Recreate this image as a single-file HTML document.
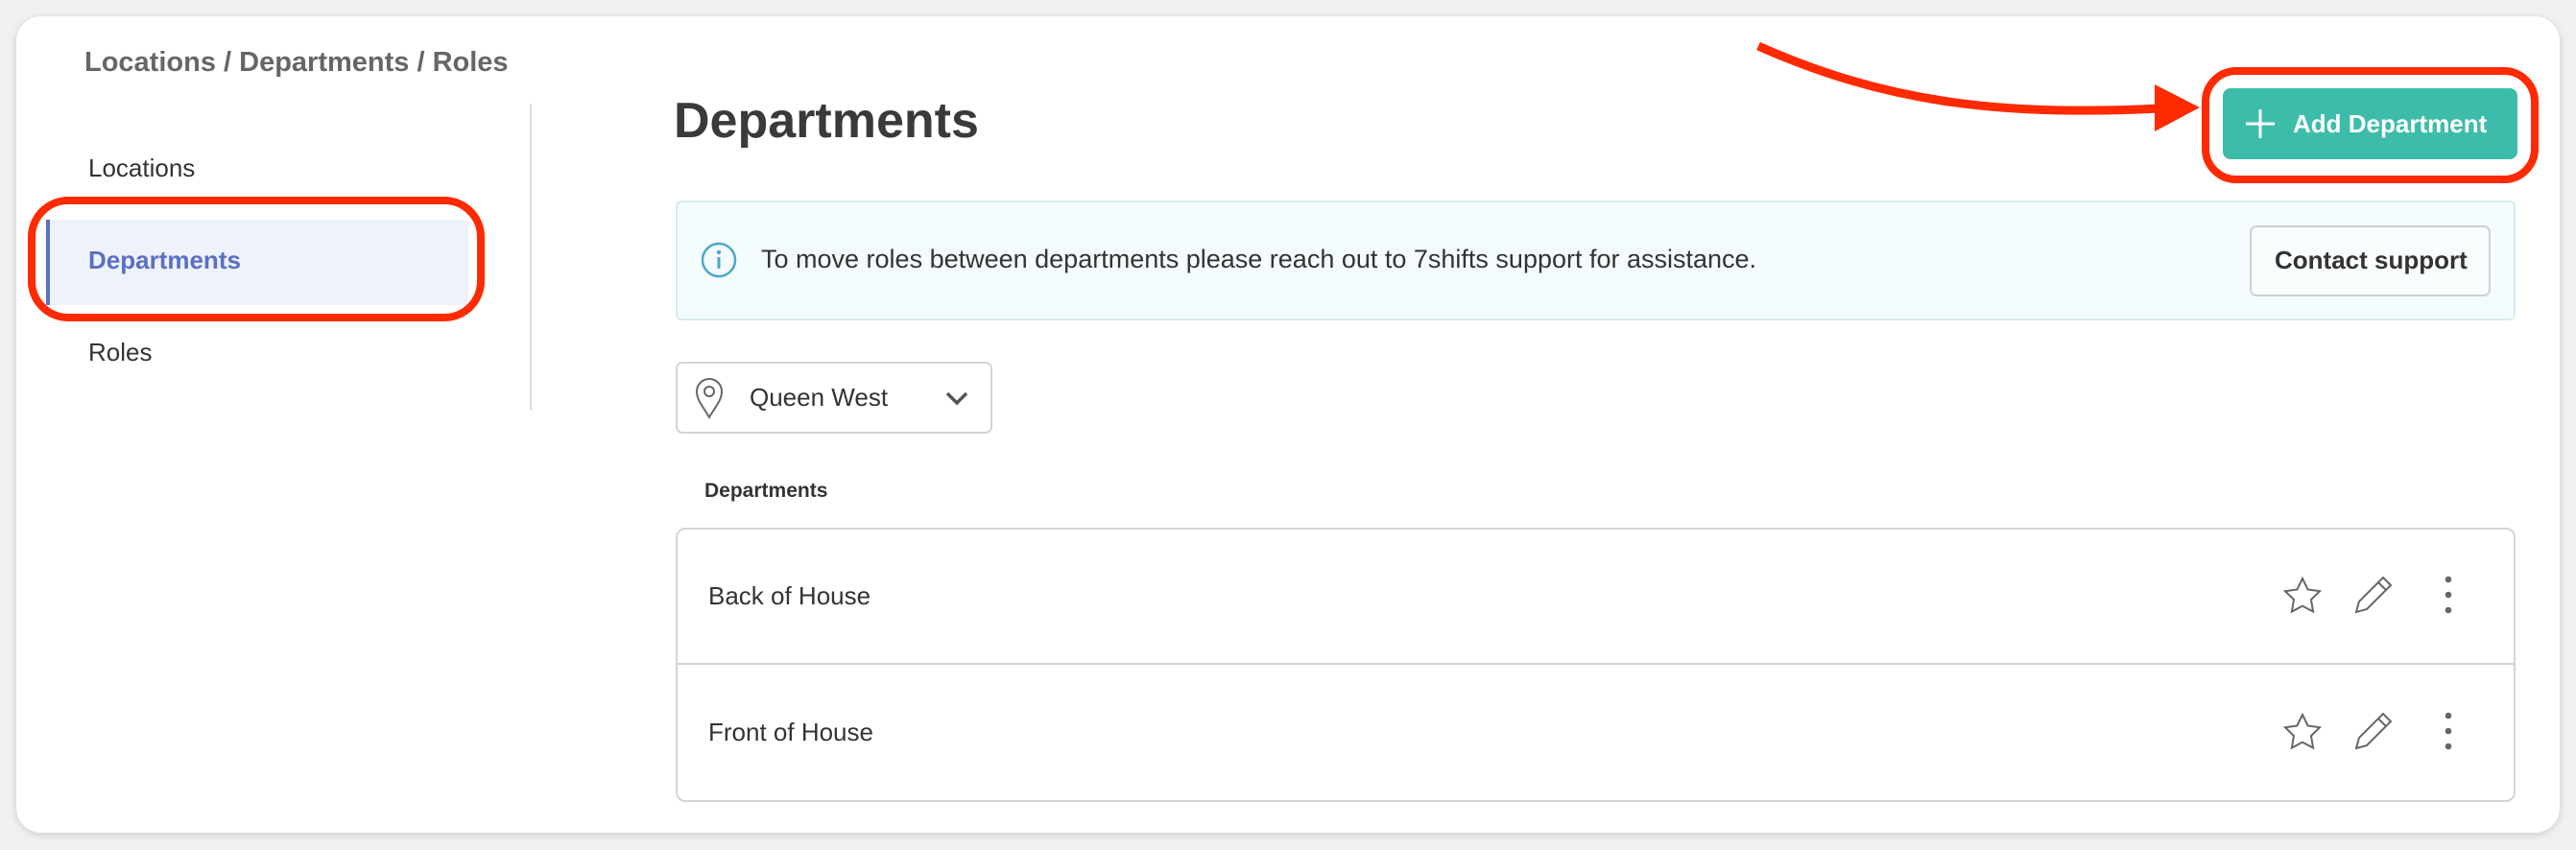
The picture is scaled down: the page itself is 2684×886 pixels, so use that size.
<!DOCTYPE html>
<html><head><style>
*{box-sizing:border-box;margin:0;padding:0}
body{width:2684px;height:886px;background:#f0f0f2;font-family:"Liberation Sans",sans-serif;position:relative;overflow:hidden;color:#333}
.card{position:absolute;left:17px;top:17px;width:2650px;height:851px;background:#fff;border-radius:26px;box-shadow:0 2px 8px rgba(0,0,0,.15)}
.a{position:absolute}
.t{font-size:26px;color:#333;white-space:nowrap}
</style></head><body>
<div class="card"></div>
<div class="a" style="left:88px;top:49px;font-size:29px;font-weight:bold;color:#666">Locations / Departments / Roles</div>
<div class="a" style="left:552px;top:108px;width:2px;height:320px;background:#ddd"></div>
<div class="a t" style="left:92px;top:160px">Locations</div>
<div class="a" style="left:48px;top:229px;width:440px;height:89px;background:#eef2fa;border-left:4px solid #5a6fc6"></div>
<div class="a t" style="left:92px;top:256px;color:#5a6fc6;font-weight:bold">Departments</div>
<div class="a t" style="left:92px;top:352px">Roles</div>
<div class="a" style="left:29px;top:205px;width:476px;height:130px;border:8px solid #ff2a00;border-radius:42px"></div>

<div class="a" style="left:702px;top:96px;font-size:52px;font-weight:bold;color:#3a3a3a">Departments</div>

<div class="a" style="left:2316px;top:92px;width:307px;height:74px;background:#3dbda9;border-radius:8px"></div>
<svg class="a" style="left:2338px;top:112px" width="34" height="34"><path d="M17 2V32M2 17H32" stroke="#fff" stroke-width="3"/></svg>
<div class="a" style="left:2389px;top:114px;font-size:26px;font-weight:bold;color:#fff">Add Department</div>
<div class="a" style="left:2294px;top:70px;width:351px;height:121px;border:8px solid #ff2a00;border-radius:36px"></div>
<svg class="a" style="left:0;top:0" width="2684" height="886"><path d="M1832 48 C1960 105 2080 122 2250 113" stroke="#ff2a00" stroke-width="9" fill="none"/><polygon points="2245,88 2292,112 2245,137" fill="#ff2a00"/></svg>

<div class="a" style="left:704px;top:209px;width:1917px;height:125px;background:#f4fbfd;border:2px solid #d8ebf1;border-radius:6px"></div>
<svg class="a" style="left:730px;top:252px" width="38" height="38"><circle cx="19" cy="19" r="17" fill="none" stroke="#4aa8c8" stroke-width="2.5"/><circle cx="19" cy="11" r="2.2" fill="#4aa8c8"/><path d="M19 16V28" stroke="#4aa8c8" stroke-width="3"/></svg>
<div class="a" style="left:793px;top:255px;font-size:27px;white-space:nowrap">To move roles between departments please reach out to 7shifts support for assistance.</div>
<div class="a" style="left:2344px;top:235px;width:251px;height:74px;background:#fafdfe;border:2px solid #d0d0d0;border-radius:7px"></div>
<div class="a t" style="left:2370px;top:256px;font-weight:bold">Contact support</div>

<div class="a" style="left:704px;top:377px;width:330px;height:75px;border:2px solid #d5d5d5;border-radius:7px"></div>
<svg class="a" style="left:722px;top:393px" width="34" height="44"><path d="M17 42 C10 30 4 24 4 15 A13 13 0 0 1 30 15 C30 24 24 30 17 42Z" fill="none" stroke="#666" stroke-width="2"/><circle cx="17" cy="15" r="5" fill="none" stroke="#666" stroke-width="2"/></svg>
<div class="a t" style="left:781px;top:399px">Queen West</div>
<svg class="a" style="left:984px;top:406px" width="26" height="18"><path d="M3 4L13 14L23 4" fill="none" stroke="#555" stroke-width="3.5"/></svg>

<div class="a" style="left:734px;top:500px;font-size:21px;font-weight:bold;color:#333">Departments</div>
<div class="a" style="left:704px;top:550px;width:1917px;height:286px;border:2px solid #d5d5d5;border-radius:10px"></div>
<div class="a" style="left:704px;top:691px;width:1917px;height:2px;background:#d5d5d5"></div>
<div class="a t" style="left:738px;top:606px">Back of House</div>
<div class="a t" style="left:738px;top:748px">Front of House</div>
<svg class="a" style="left:2370px;top:594px" width="200" height="60"><path d="M29 9L34.6 20.5 47 22.2 38 31 40.1 43.5 29 37.6 17.9 43.5 20 31 11 22.2 23.4 20.5Z" fill="none" stroke="#666" stroke-width="2"/><path d="M113 8L121 16 96 41 85 44 88 33ZM108 13L116 21" fill="none" stroke="#666" stroke-width="2"/><circle cx="181" cy="10" r="3.3" fill="#666"/><circle cx="181" cy="26" r="3.3" fill="#666"/><circle cx="181" cy="42" r="3.3" fill="#666"/></svg>
<svg class="a" style="left:2370px;top:736px" width="200" height="60"><path d="M29 9L34.6 20.5 47 22.2 38 31 40.1 43.5 29 37.6 17.9 43.5 20 31 11 22.2 23.4 20.5Z" fill="none" stroke="#666" stroke-width="2"/><path d="M113 8L121 16 96 41 85 44 88 33ZM108 13L116 21" fill="none" stroke="#666" stroke-width="2"/><circle cx="181" cy="10" r="3.3" fill="#666"/><circle cx="181" cy="26" r="3.3" fill="#666"/><circle cx="181" cy="42" r="3.3" fill="#666"/></svg>
</body></html>
